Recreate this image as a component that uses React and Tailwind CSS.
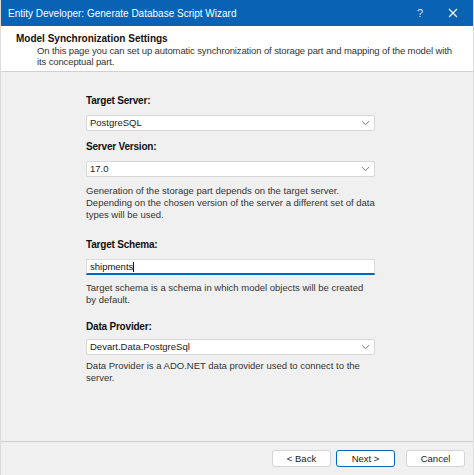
function Chevron() {
  return (
    <svg width="9" height="6" viewBox="0 0 9 6" className="shrink-0">
      <path d="M1 1.2 L4.5 4.6 L8 1.2" fill="none" stroke="#7a7a7a" strokeWidth="1" />
    </svg>
  )
}

function Combo({ value }) {
  return (
    <div className="h-[16px] bg-white border border-[#d6d6d6] rounded-[2px] flex items-center justify-between pl-[3px] pr-[4px]">
      <span className="text-[9.5px] text-[#1a1a1a] leading-none">{value}</span>
      <Chevron />
    </div>
  )
}

function Label({ children }) {
  return (
    <div className="text-[10px] font-bold text-[#111] leading-[12px] tracking-[-0.2px]">{children}</div>
  )
}

function Help({ children }) {
  return <p className="text-[9.5px] text-[#333] leading-[12px]">{children}</p>
}

export default function App() {
  return (
    <div
      className="w-[474px] h-[475px] bg-[#f0f0f0] flex flex-col border-x border-[#dcdcdc] overflow-hidden"
      style={{ fontFamily: '"Liberation Sans", Arial, sans-serif' }}
    >
      {/* title bar */}
      <div className="h-[26px] bg-[#0a62b5] flex items-center pl-[7px] text-white">
        <span className="text-[10px]">Entity Developer: Generate Database Script Wizard</span>
        <span className="ml-auto w-[26px] text-center text-[11px] text-white/80">?</span>
        <span className="w-[40px] flex justify-center">
          <svg width="10" height="10" viewBox="0 0 10 10">
            <path d="M1 1 L9 9 M9 1 L1 9" stroke="white" strokeWidth="1.1" />
          </svg>
        </span>
      </div>

      {/* header */}
      <div className="h-[46px] bg-white border-b border-[#d0d0d0] pl-[15px] pt-[7px] pr-[6px]">
        <div className="text-[10px] font-bold text-[#111] leading-[12px]">Model Synchronization Settings</div>
        <p className="pl-[21px] text-[9.5px] text-[#333] leading-[11px] tracking-[-0.12px]">
          On this page you can set up automatic synchronization of storage part and mapping of the model with
          <br />
          its conceptual part.
        </p>
      </div>

      {/* body */}
      <div className="flex-1 flex flex-col pl-[85px] pr-[98px] pt-[23px]">
        <Label>Target Server:</Label>
        <div className="mt-[8px]">
          <Combo value="PostgreSQL" />
        </div>

        <div className="mt-[10px]">
          <Label>Server Version:</Label>
        </div>
        <div className="mt-[8px]">
          <Combo value="17.0" />
        </div>
        <div className="mt-[8px]">
          <Help>
            Generation of the storage part depends on the target server. Depending on the chosen version of the server a different set of data types will be used.
          </Help>
        </div>

        <div className="mt-[18px]">
          <Label>Target Schema:</Label>
        </div>
        <div className="mt-[8px] h-[16px] bg-white border border-[#dcdcdc] border-b-2 border-b-[#0067c0] flex items-center pl-[3px]">
          <span className="text-[9.5px] text-[#111] leading-none">shipments</span>
          <span className="w-px h-[10px] bg-[#111]" />
        </div>
        <div className="mt-[7px]">
          <Help>Target schema is a schema in which model objects will be created by default.</Help>
        </div>

        <div className="mt-[15px]">
          <Label>Data Provider:</Label>
        </div>
        <div className="mt-[6px]">
          <Combo value="Devart.Data.PostgreSql" />
        </div>
        <div className="mt-[5px]">
          <Help>Data Provider is a ADO.NET data provider used to connect to the server.</Help>
        </div>
      </div>

      {/* footer */}
      <div className="h-[34px] border-t border-[#cfcfcf] flex items-start justify-end pt-[8px] pr-[8px] gap-[5px]">
        <button className="w-[59px] h-[17px] bg-white border border-[#d4d4d4] rounded-[3px] text-[9.5px] text-[#222] leading-none">
          &lt; Back
        </button>
        <button className="w-[59px] h-[17px] bg-white border-[1.5px] border-[#0067c0] rounded-[3px] text-[9.5px] text-[#222] leading-none">
          Next &gt;
        </button>
        <button className="ml-[6px] w-[59px] h-[17px] bg-white border border-[#d4d4d4] rounded-[3px] text-[9.5px] text-[#222] leading-none">
          Cancel
        </button>
      </div>
    </div>
  )
}
